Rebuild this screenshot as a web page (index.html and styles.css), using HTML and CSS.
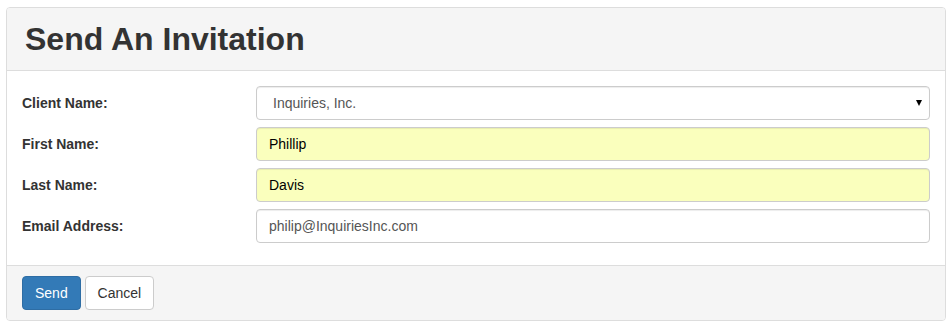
FILE: index.html
```html
<!DOCTYPE html>
<html lang="en">
<head>
  <meta charset="UTF-8" />
  <title>Send An Invitation</title>
  <link rel="stylesheet" href="styles.css">
</head>
<body>
  <div class="panel">
    <div class="panel-heading">
      <h1>Send An Invitation</h1>
    </div>

    <div class="panel-body">
      <div class="form-row">
        <label for="client">Client Name:</label>
        <div class="select-wrap">
          <select id="client" class="form-control">
            <option>Inquiries, Inc.</option>
          </select>
          <span class="caret"></span>
        </div>
      </div>
      <div class="form-row">
        <label for="first">First Name:</label>
        <input id="first" class="form-control filled" type="text" value="Phillip" />
      </div>
      <div class="form-row">
        <label for="last">Last Name:</label>
        <input id="last" class="form-control filled" type="text" value="Davis" />
      </div>
      <div class="form-row">
        <label for="email">Email Address:</label>
        <input id="email" class="form-control" type="text" value="philip@InquiriesInc.com" />
      </div>
    </div>

    <div class="panel-footer">
      <button class="btn btn-primary">Send</button>
      <button class="btn btn-default">Cancel</button>
    </div>
  </div>
</body>
</html>
```

FILE: styles.css
```css
body {
  margin: 0;
  padding: 7px 5px 7px 6px;
  font-family: "Liberation Sans", Arial, sans-serif;
  font-size: 14px;
  color: #333;
  background: #fff;
}
.panel {
  border: 1px solid #ddd;
  border-radius: 4px;
  overflow: hidden;
}
.panel-heading {
  background: #f5f5f5;
  border-bottom: 1px solid #ddd;
  padding: 13px 18px 13px;
}
.panel-heading h1 {
  margin: 0;
  font-size: 32px;
  line-height: 36px;
  font-weight: bold;
  color: #333;
}
.panel-body {
  padding: 15px 15px 22px;
  display: flex;
  flex-direction: column;
  gap: 7px;
}
.form-row {
  display: grid;
  grid-template-columns: 234px 1fr;
  align-items: center;
}
.form-row label {
  font-weight: bold;
}
.form-control {
  box-sizing: border-box;
  width: 100%;
  height: 34px;
  padding: 6px 12px;
  font-family: inherit;
  font-size: 14px;
  line-height: 20px;
  color: #555;
  background: #fff;
  border: 1px solid #ccc;
  border-radius: 4px;
  box-shadow: inset 0 1px 1px rgba(0, 0, 0, 0.075);
  outline: none;
}
.form-control.filled {
  background: #faffbd;
  color: #000;
}
.select-wrap {
  position: relative;
}
.select-wrap select {
  appearance: none;
  -webkit-appearance: none;
  padding-left: 16px;
}
.caret {
  position: absolute;
  right: 8px;
  top: 14px;
  width: 0;
  height: 0;
  border-left: 3.5px solid transparent;
  border-right: 3.5px solid transparent;
  border-top: 6px solid #000;
  pointer-events: none;
}
.panel-footer {
  background: #f5f5f5;
  border-top: 1px solid #ddd;
  padding: 10px 15px;
}
.btn {
  height: 34px;
  padding: 6px 12px;
  font-family: inherit;
  font-size: 14px;
  line-height: 20px;
  border: 1px solid transparent;
  border-radius: 4px;
  cursor: pointer;
}
.btn-primary {
  background: #337ab7;
  border-color: #2e6da4;
  color: #fff;
}
.btn-default {
  background: #fff;
  border-color: #ccc;
  color: #333;
}
```
